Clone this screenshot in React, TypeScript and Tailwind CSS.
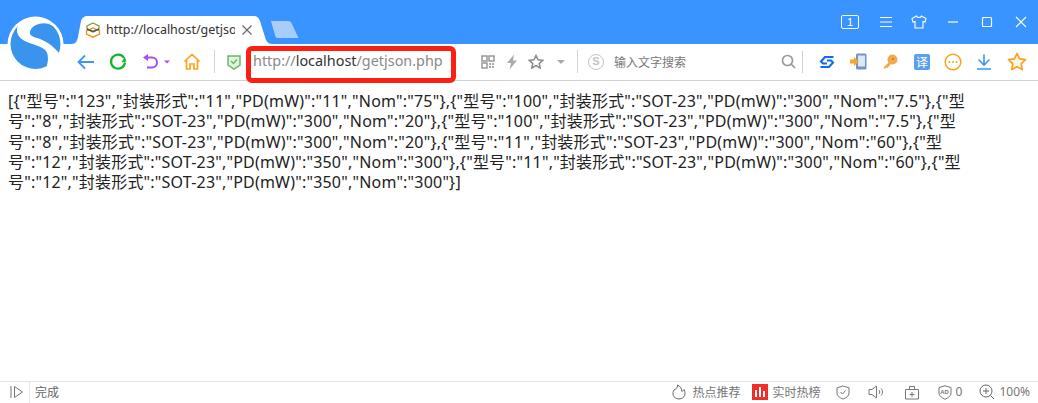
const LINES = [
  '[{"型号":"123","封装形式":"11","PD(mW)":"11","Nom":"75"},{"型号":"100","封装形式":"SOT-23","PD(mW)":"300","Nom":"7.5"},{"型',
  '号":"8","封装形式":"SOT-23","PD(mW)":"300","Nom":"20"},{"型号":"100","封装形式":"SOT-23","PD(mW)":"300","Nom":"7.5"},{"型',
  '号":"8","封装形式":"SOT-23","PD(mW)":"300","Nom":"20"},{"型号":"11","封装形式":"SOT-23","PD(mW)":"300","Nom":"60"},{"型',
  '号":"12","封装形式":"SOT-23","PD(mW)":"350","Nom":"300"},{"型号":"11","封装形式":"SOT-23","PD(mW)":"300","Nom":"60"},{"型',
  '号":"12","封装形式":"SOT-23","PD(mW)":"350","Nom":"300"}]',
];

function Ico({ w = 20, h = 20, vb, className = "", children }: { w?: number; h?: number; vb?: string; className?: string; children: React.ReactNode }) {
  return (
    <svg width={w} height={h} viewBox={vb ?? `0 0 ${w} ${h}`} fill="none" className={`shrink-0 ${className}`}>
      {children}
    </svg>
  );
}

function Logo() {
  return (
    <svg width="60" height="60" viewBox="5 15 60 60" className="absolute left-[5px] top-[15px]">
      <defs>
        <clipPath id="logo-disc"><circle cx="35.500" cy="44" r="25" /></clipPath>
      </defs>
      <circle cx="35.500" cy="44.500" r="28" fill="#fff" />
      <g clipPath="url(#logo-disc)" fill="#3a94ee">
        <path d="M19 24 C15 30 17 36 23 40 C29 44 39 45 44 49 C48 52 50 58 45 72 L5 72 L5 24 Z" />
        <path d="M30 32 C31 25 44 20 53 26 C58 30 64 36 64 42 L64 54 L60 54 C54 47 48 42 40 39 C34 37 29 36 30 32 Z" />
      </g>
    </svg>
  );
}

function TitleBar() {
  return (
    <div className="relative flex h-[44px] shrink-0 items-end bg-[#3994ff]">
      <div className="relative ml-[72px] flex h-[28px] w-[200px] items-center">
        <svg width="200" height="28" viewBox="0 0 200 28" className="absolute left-0 top-0">
          <path d="M0 28 C4 28 5 25 6 21 L9 5 C10 2 12 0 16 0 L182 0 C185 0 187 2 188 5 L193 21 C194 25 196 28 200 28 Z" fill="#fff" />
        </svg>
        <div className="relative ml-[13px] flex items-center">
          <Ico w={16} h={16}>
            <path d="M8 1 L14 4 L14 7 L8 10 L2 7 L2 4 Z" fill="#fff" stroke="#7fa33a" strokeWidth="1.300" />
            <path d="M8 6 L14.500 9 L14.500 12 L8 15.200 L1.500 12 L1.500 9 Z" stroke="#f28c18" strokeWidth="1.300" />
            <path d="M2 7 L8 9.500 L14 7" stroke="#555" strokeWidth="1.400" />
          </Ico>
          <span className="ml-[5px] w-[129px] overflow-hidden whitespace-nowrap text-[12.5px] leading-[18px] text-[#333] [font-family:'Noto_Sans',sans-serif]">
            http://localhost/getjson.php
          </span>
          <Ico w={12} h={12} className="ml-[6px]">
            <path d="M1.500 1.500 L10.500 10.500 M10.500 1.500 L1.500 10.500" stroke="#666" strokeWidth="1.100" />
          </Ico>
        </div>
      </div>
      <svg width="28" height="17" viewBox="0 0 28 17" className="mb-[6px] ml-[-1px]">
        <path d="M0 0 L17 0 C19 0 20 1 21 3 L27.500 17 L7 17 C5 17 4.500 16 4 14 Z" fill="#a9cdfb" />
      </svg>
      <div className="absolute right-[11px] top-0 flex h-[44px] items-center text-white">
        <div className="flex h-[14px] w-[18px] items-center justify-center rounded-[2px] border border-white text-[11px] leading-none [font-family:'Liberation_Sans',sans-serif]">1</div>
        <Ico w={14} h={12} className="ml-[20px]"><path d="M1 1.500 H13 M1 6 H13 M1 10.500 H13" stroke="#fff" strokeWidth="1" /></Ico>
        <Ico w={16} h={14} className="ml-[18px]"><path d="M5.500 1 L1 3.500 L2 7 L4 6.500 V13 H12 V6.500 L14 7 L15 3.500 L10.500 1 C10 3 6 3 5.500 1 Z" stroke="#fff" strokeWidth="1.100" /></Ico>
        <Ico w={12} h={4} className="ml-[20px]"><path d="M1 2 H11" stroke="#fff" strokeWidth="1.200" /></Ico>
        <Ico w={12} h={12} className="ml-[22px]"><rect x="1.500" y="1.500" width="9" height="9" rx="1" stroke="#fff" strokeWidth="1.200" /></Ico>
        <Ico w={12} h={12} className="ml-[22px]"><path d="M1 1 L11 11 M11 1 L1 11" stroke="#fff" strokeWidth="1.100" /></Ico>
      </div>
    </div>
  );
}

function Toolbar() {
  return (
    <div className="flex h-[37px] shrink-0 items-center border-b border-[#d2d2d2] bg-white pb-[1px] pl-[77px] [font-family:'Liberation_Sans',sans-serif]">
      <Ico w={18} h={16}><path d="M8 1.500 L1.500 8 L8 14.500 M1.500 8 H17" stroke="#3d95f5" strokeWidth="1.800" /></Ico>
      <Ico w={18} h={18} className="ml-[14px]">
        <path d="M15 5 A7 7 0 1 0 16 9.500" stroke="#12b52c" strokeWidth="2.200" />
        <path d="M12 9 L17 9 L16.500 4 Z" fill="#12b52c" transform="rotate(-10 15 7)" />
      </Ico>
      <Ico w={16} h={16} className="ml-[15px]">
        <path d="M4.500 3.500 H10 A4.800 4.800 0 0 1 10 13.500 H5" stroke="#a64ef0" strokeWidth="2" />
        <path d="M6 0 L1 3.500 L6 7 Z" fill="#a64ef0" />
      </Ico>
      <Ico w={6} h={4} className="ml-[6px]"><path d="M0 0.500 H6 L3 3.500 Z" fill="#a64ef0" /></Ico>
      <Ico w={18} h={18} className="ml-[13px]"><path d="M1.500 8.500 L9 1.500 L16.500 8.500 M3.500 7 V16 H7 V11 H11 V16 H14.500 V7" stroke="#ffa31a" strokeWidth="1.700" /></Ico>
      <div className="ml-[13px] h-[23px] w-px bg-[#d5d5d5]" />
      <Ico w={14} h={16} className="ml-[12px]">
        <path d="M1 2 H13 V11 L7 15 L1 11 Z" fill="#e2f3df" stroke="#68b968" strokeWidth="1.500" />
        <path d="M4 7 L6.500 9.500 L10 5.500" stroke="#68b968" strokeWidth="1.500" />
      </Ico>
      <div className="relative z-10 ml-[5px] mt-[2px] flex h-[37px] w-[210px] shrink-0 items-center self-start rounded-[6px] border-[5px] border-[#fb1f14] bg-white pb-[7px] pl-[2px] text-[14.400px] whitespace-nowrap text-[#8a8a8a] [font-family:'Noto_Sans',sans-serif]">
        <span>http://</span><span className="text-[#333]">localhost</span><span>/getjson.php</span>
      </div>
      <Ico w={14} h={14} className="ml-[25px]">
        <path d="M1 1 H6 V6 H1 Z M8 1 H13 V6 H8 Z M1 8 H6 V13 H1 Z" stroke="#999" strokeWidth="1.500" />
        <path d="M8 8 H10 V10 H8 Z M11 8 H13 V10 H11 Z M8 11 H10 V13 H8 Z M11 11 H13 V13 H11 Z" fill="#aaa" />
      </Ico>
      <Ico w={12} h={16} className="ml-[11px]"><path d="M8 0.500 L1 9 H5 L3.500 15.500 L11 6.500 H7 Z" fill="#aaa" /></Ico>
      <Ico w={16} h={15} className="ml-[10px]"><path d="M8 1.500 L10 5.800 L14.700 6.300 L11.200 9.500 L12.200 14 L8 11.700 L3.800 14 L4.800 9.500 L1.300 6.300 L6 5.800 Z" stroke="#888" strokeWidth="1.500" /></Ico>
      <Ico w={8} h={4} className="ml-[13px]"><path d="M0 0 H8 L4 4 Z" fill="#aaa" /></Ico>
      <div className="ml-[12px] h-[23px] w-px bg-[#d5d5d5]" />
      <div className="ml-[10px] flex h-[16px] w-[16px] shrink-0 items-center justify-center rounded-full border-[1.500px] border-[#c4c4c4] text-[11px] leading-none font-bold text-[#c4c4c4]">S</div>
      <span className="ml-[10px] w-[160px] text-[12px] text-[#777] [font-family:'Noto_Sans_CJK_SC',sans-serif]">输入文字搜索</span>
      <Ico w={15} h={15} className="ml-[7px]">
        <circle cx="6.500" cy="6.500" r="5" stroke="#999" strokeWidth="1.700" />
        <path d="M10 10 L14 14" stroke="#999" strokeWidth="1.700" />
      </Ico>
      <div className="ml-[6px] h-[22px] w-px bg-[#cfcfcf]" />
      <Ico w={16} h={14} className="ml-[16px]">
        <path d="M14.500 2 H6 L2 6.500 L4 8.500 H8 M1.500 12 H10 L14 7.500 L12 5.500 H8" stroke="#0e6cf0" strokeWidth="2.100" />
      </Ico>
      <Ico w={17} h={17} className="ml-[15px]">
        <rect x="6" y="0.500" width="10.500" height="16" rx="1.500" fill="#6e95c8" />
        <rect x="8" y="2.500" width="7" height="11" fill="#dbe8f7" />
        <path d="M0 6.500 H4 V4 L9 8.500 L4 13 V10.500 H0 Z" fill="#f5a623" />
      </Ico>
      <Ico w={16} h={16} className="ml-[15px]">
        <circle cx="10.500" cy="5.500" r="5" fill="#f2a94e" />
        <circle cx="11" cy="5" r="1" fill="#b87a2a" />
        <path d="M7 8 L1.500 13.500 L3 15 L4.500 13.500 L5.500 14 L9 10 Z" fill="#f2a94e" />
      </Ico>
      <div className="ml-[16px] flex h-[16px] w-[16px] shrink-0 items-center justify-center rounded-[2px] bg-[#5c9ff0] text-[12px] leading-none text-white [font-family:'Noto_Sans_CJK_SC',sans-serif]">译</div>
      <Ico w={18} h={18} className="ml-[14px]">
        <circle cx="9" cy="9" r="7.800" stroke="#f8a31c" strokeWidth="1.500" />
        <circle cx="5.500" cy="9" r="1" fill="#f8a31c" /><circle cx="9" cy="9" r="1" fill="#f8a31c" /><circle cx="12.500" cy="9" r="1" fill="#f8a31c" />
      </Ico>
      <Ico w={16} h={16} className="ml-[14px]"><path d="M8 0.500 V10.500 M2.500 5.500 L8 11 L13.500 5.500 M1 15 H15" stroke="#3d95f5" strokeWidth="1.600" /></Ico>
      <Ico w={20} h={19} className="ml-[15px]"><path d="M10 1.500 L12.600 6.900 L18.500 7.700 L14.200 11.800 L15.300 17.600 L10 14.800 L4.700 17.600 L5.800 11.800 L1.500 7.700 L7.400 6.900 Z" fill="#fff7e6" stroke="#f8a31c" strokeWidth="1.700" strokeLinejoin="round" /></Ico>
    </div>
  );
}

function Status() {
  return (
    <div className="flex h-[22px] shrink-0 items-center border-t border-[#e6e6e6] bg-white pb-[1px] pl-[10px] text-[12px] text-[#666] [font-family:'Noto_Sans_CJK_SC',sans-serif]">
      <Ico w={14} h={14}><path d="M1 1 V13 M4.500 1.500 L12.500 7 L4.500 12.500 Z" stroke="#777" strokeWidth="1" /></Ico>
      <div className="ml-[5px] h-[21px] w-px bg-[#e6e6e6]" />
      <span className="ml-[5px]">完成</span>
      <div className="flex-1" />
      <Ico w={16} h={16}><path d="M3 6 C1 9 1.500 14.500 8 15 C14.500 14.500 15 9 13 5.500 L11 7.500 C10.500 4 9 2 6.500 1 C7 4 4.500 5 3 6 Z" stroke="#666" strokeWidth="1" /></Ico>
      <span className="ml-[6px] text-[#777]">热点推荐</span>
      <div className="ml-[11px] flex h-[16px] w-[16px] items-end justify-center gap-[2px] bg-[#ee2f2a] pb-[3px]">
        <div className="h-[7px] w-[2px] bg-white" /><div className="h-[10px] w-[2px] bg-white" /><div className="h-[6px] w-[2px] bg-white" />
      </div>
      <span className="ml-[5px] text-[#777]">实时热榜</span>
      <Ico w={14} h={15} className="ml-[15px]">
        <path d="M7 1 L13 2.800 V8 C13 11 10 13 7 14 C4 13 1 11 1 8 V2.800 Z M4.500 7 L6.500 9 L9.500 5.500" stroke="#777" strokeWidth="1" />
      </Ico>
      <Ico w={16} h={14} className="ml-[18px]">
        <path d="M1 4.500 H4 L8.500 1 V13 L4 9.500 H1 Z M11 5 C12 6 12 8 11 9 M13 3.500 C15 5.500 15 8.500 13 10.500" stroke="#777" strokeWidth="1" />
      </Ico>
      <Ico w={16} h={15} className="ml-[20px]">
        <path d="M1.500 4.500 H14.500 V14 H1.500 Z M5.500 4.500 V1.500 H10.500 V4.500 M8 7 V12 M5.500 9.500 H10.500" stroke="#777" strokeWidth="1" />
      </Ico>
      <div className="relative ml-[18px] h-[15px] w-[14px]">
        <Ico w={14} h={15}><path d="M7 0.800 L13 2.500 V8 C13 11 10 13 7 14.200 C4 13 1 11 1 8 V2.500 Z" stroke="#777" strokeWidth="1" /></Ico>
        <span className="absolute inset-0 flex items-center justify-center text-[6px] leading-none font-bold text-[#777] [font-family:'Liberation_Sans',sans-serif]">AD</span>
      </div>
      <span className="ml-[4px] text-[#777] [font-family:'Noto_Sans',sans-serif]">0</span>
      <Ico w={16} h={16} className="ml-[17px]">
        <circle cx="7" cy="7" r="6" stroke="#666" strokeWidth="1" />
        <path d="M4 7 H10 M7 4 V10 M11.500 11.500 L15 15" stroke="#666" strokeWidth="1" />
      </Ico>
      <span className="ml-[4px] mr-[8px] text-[#777] [font-family:'Noto_Sans',sans-serif]">100%</span>
    </div>
  );
}

export default function App() {
  return (
    <div className="relative flex h-[403px] w-[1038px] flex-col overflow-hidden bg-white">
      <TitleBar />
      <Toolbar />
      <main className="flex-1 pl-[8px] pt-[10px] text-[16px] leading-[20.300px] tracking-[0.2px] whitespace-nowrap text-[#222] [font-family:'Noto_Sans','Noto_Sans_CJK_SC',sans-serif]">
        {LINES.map((l) => (
          <div key={l}>{l}</div>
        ))}
      </main>
      <Status />
      <Logo />
    </div>
  );
}
